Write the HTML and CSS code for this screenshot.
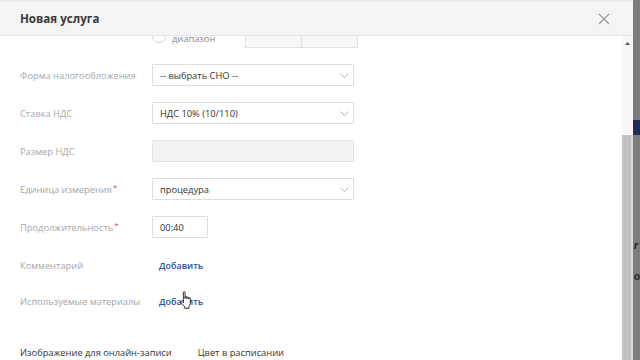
FILE: index.html
```html
<!DOCTYPE html>
<html lang="ru">
<head>
<meta charset="utf-8">
<link rel="stylesheet" href="styles.css">
</head>
<body>
<div class="screen">
  <div class="modal">
    <div class="modal-header">
      <h1 class="title">Новая услуга</h1>
      <svg class="close" width="12" height="12" viewBox="0 0 12 12"><path d="M1 1L11 11M11 1L1 11" stroke="#9a9a9a" stroke-width="1.2" fill="none"/></svg>
    </div>
    <div class="modal-main">
      <div class="modal-body">
        <div class="form">
          <div class="row">
            <div class="label"></div>
            <label class="radio"><span class="radio-dot"></span><span class="radio-text">диапазон</span></label>
            <div class="range"><span class="range-box"></span><span class="range-box"></span></div>
          </div>
          <div class="row">
            <div class="label">Форма налогообложения</div>
            <div class="field select">-- выбрать СНО --<svg class="chev" width="9" height="5" viewBox="0 0 9 5"><path d="M0.5 0.5L4.5 4.5L8.5 0.5" stroke="#b5b5b5" stroke-width="1" fill="none"/></svg></div>
          </div>
          <div class="row">
            <div class="label">Ставка НДС</div>
            <div class="field select">НДС 10% (10/110)<svg class="chev" width="9" height="5" viewBox="0 0 9 5"><path d="M0.5 0.5L4.5 4.5L8.5 0.5" stroke="#b5b5b5" stroke-width="1" fill="none"/></svg></div>
          </div>
          <div class="row">
            <div class="label">Размер НДС</div>
            <div class="field disabled"></div>
          </div>
          <div class="row">
            <div class="label">Единица измерения<sup class="req">*</sup></div>
            <div class="field select">процедура<svg class="chev" width="9" height="5" viewBox="0 0 9 5"><path d="M0.5 0.5L4.5 4.5L8.5 0.5" stroke="#b5b5b5" stroke-width="1" fill="none"/></svg></div>
          </div>
          <div class="row">
            <div class="label">Продолжительность<sup class="req">*</sup></div>
            <div class="field short">00:40</div>
          </div>
          <div class="row">
            <div class="label">Комментарий</div>
            <a class="link">Добавить</a>
          </div>
          <div class="row row-tight">
            <div class="label">Используемые материалы</div>
            <a class="link link-hover">Добавить
              <svg class="cursor" width="14" height="18" viewBox="0 0 13 17"><path d="M4 1.2c0-.7 1.6-.7 1.6 0V7l.2-1.3c0-.7 1.5-.7 1.5 0V7.3l.2-1c0-.7 1.5-.7 1.5 0v1.3l.2-.7c0-.7 1.4-.7 1.4 0v4.4c0 1.6-.7 2.6-1.4 3.5v1.5H5.3v-1.5C4 13.6 2.9 12.2 1.6 10.6c-.6-.8.3-1.6 1-1L4 11V1.2z" fill="#fff" stroke="#222" stroke-width="0.9" stroke-linejoin="round"/></svg>
            </a>
          </div>
        </div>
        <div class="sections">
          <div class="section-title">Изображение для онлайн-записи</div>
          <div class="section-title">Цвет в расписании</div>
        </div>
      </div>
      <div class="scrollbar">
        <div class="scroll-top"><svg width="5" height="3" viewBox="0 0 5 3"><path d="M0 3L2.5 0L5 3z" fill="#555"/></svg></div>
        <div class="scroll-thumb"></div>
      </div>
    </div>
  </div>
  <div class="backdrop">
    <div class="bd-blue"></div>
    <div class="bd-text bd-r">r</div>
    <div class="bd-text bd-o">o</div>
  </div>
</div>
</body>
</html>
```

FILE: styles.css
```css
* { box-sizing: border-box; }
html, body { margin: 0; padding: 0; width: 640px; height: 360px; overflow: hidden; background: #fff; }
body { font-family: "Open Sans", "Noto Sans", sans-serif; }

.screen { display: flex; width: 640px; height: 360px; }

.modal { width: 633px; height: 360px; display: flex; flex-direction: column; background: #fff; }

.modal-header {
  height: 36px;
  flex: none;
  background: #f4f4f4;
  border-top: 2px solid #ebebeb;
  border-bottom: 1px solid #e6e6e6;
  display: flex;
  align-items: center;
  justify-content: space-between;
  padding: 0 23px 0 20px;
  position: relative;
  z-index: 2;
}
.title { margin: 0; font-size: 11.6px; font-weight: 700; color: #3a3a3a; }
.close { display: block; }

.modal-main { flex: 1; display: flex; min-height: 0; }
.modal-body { flex: 1; overflow: hidden; padding-left: 20px; position: relative; }

.form { margin-top: -10px; display: flex; flex-direction: column; gap: 16px; }
.row { display: flex; align-items: center; height: 22px; }
.row-tight { margin-top: -2px; }
.label { width: 132px; flex: none; font-size: 9.3px; color: #a6a6a6; }
.req { color: #e04040; font-size: 8px; vertical-align: top; line-height: 1; margin-left: 1px; }

.radio { display: flex; align-items: center; width: 93px; }
.radio-dot { width: 14px; height: 14px; border: 1px solid #d2d2d2; border-radius: 50%; margin-right: 6px; margin-top: -3px; background: #fff; }
.radio-text { font-size: 9.3px; color: #888; margin-top: 2px; }
.range { display: flex; }
.range-box { width: 57px; height: 22px; border: 1px solid #e0e0e0; background: #f7f7f7; }
.range-box + .range-box { border-left: none; width: 56px; }

.field {
  height: 22px;
  border: 1px solid #dcdcdc;
  border-radius: 1px;
  font-size: 9.3px;
  color: #333;
  display: flex;
  align-items: center;
  padding-left: 7px;
  width: 202px;
  background: #fff;
}
.select { justify-content: space-between; padding-right: 4px; }
.chev { display: block; }
.disabled { background: #f2f2f2; border-color: #e4e4e4; }
.short { width: 56px; }

.link { font-size: 9px; font-weight: 600; color: #2f52a0; padding-left: 7px; position: relative; }
.cursor { position: absolute; left: 27px; top: -4px; }

.sections { display: flex; gap: 26px; margin-top: 34px; }
.section-title { font-size: 9.3px; color: #333; }

.scrollbar { width: 11px; flex: none; display: flex; flex-direction: column; background: #d9d9d9; }
.scroll-top { height: 99px; background: #f7f7f7; display: flex; justify-content: center; padding-top: 6px; }
.scroll-top svg { display: block; }
.scroll-thumb { flex: 1; background: #c2c2c2; margin-right: 2px; }

.backdrop { flex: 1; background: #7c7c7c; position: relative; }
.bd-blue { position: absolute; left: 0; top: 120px; width: 7px; height: 15px; background: #1d2d5e; }
.bd-text { position: absolute; left: 1px; font-size: 10px; font-weight: 700; color: #222; font-family: "Liberation Sans", sans-serif; }
.bd-r { top: 240px; font-style: italic; }
.bd-o { top: 271px; }
```
